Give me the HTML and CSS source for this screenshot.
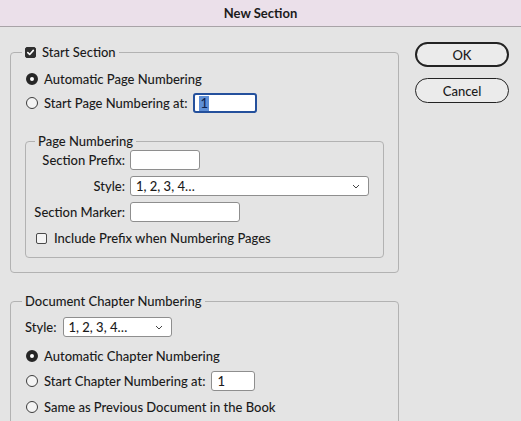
FILE: index.html
```html
<!DOCTYPE html>
<html>
<head>
<meta charset="utf-8">
<link rel="stylesheet" href="styles.css">
</head>
<body>
<div class="dialog">
  <div class="titlebar">New Section</div>
  <div class="content">
    <div class="main">
      <fieldset class="group g1">
        <legend class="legend"><span class="check on"><svg width="9" height="9" viewBox="0 0 9 9"><path d="M1.8 4.6 L3.7 6.5 L7.3 2.4" fill="none" stroke="#fff" stroke-width="1.6" stroke-linecap="round" stroke-linejoin="round"/></svg></span><span>Start Section</span></legend>
        <div class="row r1"><span class="radio on"></span><span>Automatic Page Numbering</span></div>
        <div class="row r2"><span class="radio"></span><span>Start Page Numbering at:</span><span class="field focus w-start"><span class="hl">1</span></span></div>
        <fieldset class="group inner">
          <legend class="legend in-legend">Page Numbering</legend>
          <div class="form">
            <span class="flabel">Section Prefix:</span><span class="field w-prefix"></span>
            <span class="flabel">Style:</span><span class="field select w-style"><span>1, 2, 3, 4…</span><svg class="chev" width="8" height="5" viewBox="0 0 8 5"><path d="M1 1 L4 4 L7 1" fill="none" stroke="#444" stroke-width="1"/></svg></span>
            <span class="flabel">Section Marker:</span><span class="field w-marker"></span>
          </div>
          <div class="row chkrow"><span class="check"></span><span>Include Prefix when Numbering Pages</span></div>
        </fieldset>
      </fieldset>
      <fieldset class="group g2">
        <legend class="legend">Document Chapter Numbering</legend>
        <div class="row stylerow"><span>Style:</span><span class="field select w-cstyle"><span>1, 2, 3, 4…</span><svg class="chev" width="8" height="5" viewBox="0 0 8 5"><path d="M1 1 L4 4 L7 1" fill="none" stroke="#444" stroke-width="1"/></svg></span></div>
        <div class="row c1"><span class="radio on"></span><span>Automatic Chapter Numbering</span></div>
        <div class="row c2"><span class="radio"></span><span>Start Chapter Numbering at:</span><span class="field w-cstart">1</span></div>
        <div class="row c3"><span class="radio"></span><span>Same as Previous Document in the Book</span></div>
      </fieldset>
    </div>
    <div class="buttons">
      <div class="btn default">OK</div>
      <div class="btn">Cancel</div>
    </div>
  </div>
</div>
</body>
</html>
```

FILE: styles.css
```css
html, body {
  margin: 0;
  height: 421px;
  overflow: hidden;
  background: #e4e4e4;
  font-family: Lato, "Open Sans", sans-serif;
  font-size: 13px;
  font-weight: 500;
  color: #1b1b1b;
}

.titlebar {
  height: 26px;
  background: #ebe0ea;
  border-bottom: 1px solid #a8a3a7;
  display: flex;
  align-items: center;
  justify-content: center;
  font-weight: 700;
  font-size: 13px;
}

.content {
  display: flex;
  padding-left: 10px;
}

.main {
  width: 389px;
  padding-top: 17px;
}

.buttons {
  width: 94px;
  margin-left: 16px;
  padding-top: 15px;
  display: flex;
  flex-direction: column;
  gap: 11px;
}

.btn {
  height: 25px;
  box-sizing: border-box;
  border: 1px solid #232323;
  border-radius: 13px;
  display: flex;
  align-items: center;
  justify-content: center;
  background: #ebebeb;
}

.btn.default {
  border-width: 2px;
}

.group {
  margin: 0;
  min-width: 0;
  border: 1px solid #b2b2b2;
  border-radius: 4px;
  padding: 0 14px 14px 15px;
}

.legend {
  padding: 0 3px;
  margin-left: -4px;
  height: 16px;
  line-height: 16px;
  display: flex;
  align-items: center;
  gap: 6px;
}

.row {
  display: flex;
  align-items: center;
  height: 20px;
  gap: 6px;
}

.r1 { margin-top: 9px; }
.r2 { margin-top: 4px; }

.radio {
  width: 12px;
  height: 12px;
  box-sizing: border-box;
  border-radius: 50%;
  border: 1px solid #3c3c3c;
  background: #f4f4f4;
  flex: none;
}

.radio.on {
  border: 4px solid #262626;
  background: #fff;
}

.check {
  width: 11px;
  height: 11px;
  box-sizing: border-box;
  border: 1px solid #4a4a4a;
  border-radius: 2px;
  background: #f4f4f4;
  display: flex;
  align-items: center;
  justify-content: center;
  flex: none;
}

.check.on {
  background: #2f2f2f;
  border-color: #2f2f2f;
}

.field {
  height: 20px;
  box-sizing: border-box;
  border: 1px solid #8e8e8e;
  border-radius: 3px;
  background: #fff;
  display: flex;
  align-items: center;
  padding-left: 5px;
  flex: none;
}

.field.focus {
  border: 2px solid #24509c;
  padding-left: 4px;
}

.hl {
  background: #5f8fd6;
  color: #0f2550;
  line-height: 15px;
  padding: 0 1px;
}

.select {
  justify-content: space-between;
  padding-right: 8px;
}

.w-start { width: 64px; }
.w-prefix { width: 70px; }
.w-style { width: 239px; }
.w-marker { width: 110px; }
.w-cstyle { width: 109px; }
.w-cstart { width: 44px; }

.inner {
  margin: 20px 0 0 -1px;
  padding: 0 14px 11px 0;
}

.in-legend {
  margin-left: 9px;
}

.form {
  margin-top: 1px;
  display: grid;
  grid-template-columns: 99px auto;
  column-gap: 5px;
  row-gap: 6px;
  justify-content: start;
}

.flabel {
  justify-self: end;
  align-self: center;
}

.chkrow {
  height: 16px;
  margin-top: 8px;
  padding-left: 10px;
  gap: 7px;
}

.g2 {
  margin-top: 20px;
}

.stylerow {
  margin-top: 8px;
  margin-left: -1px;
}

.c1 { margin-top: 9px; }
.c2 { margin-top: 5px; }
.c3 { margin-top: 6px; }
```
